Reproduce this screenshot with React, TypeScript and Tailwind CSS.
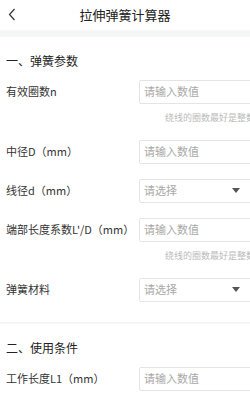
const font = {
  fontFamily: '"Noto Sans CJK SC", "Noto Sans", sans-serif',
};

type Row = {
  label: string;
  kind: "input" | "select";
  hint?: string;
};

const springRows: Row[] = [
  { label: "有效圈数n", kind: "input", hint: "绕线的圈数最好是整数" },
  { label: "中径D（mm）", kind: "input" },
  { label: "线径d（mm）", kind: "select" },
  { label: "端部长度系数L'/D（mm）", kind: "input", hint: "绕线的圈数最好是整数" },
  { label: "弹簧材料", kind: "select" },
];

const useRows: Row[] = [{ label: "工作长度L1（mm）", kind: "input" }];

function Field({ row }: { row: Row }) {
  return (
    <>
      <div className="flex h-[39px] items-center">
        <div className="w-[139px] shrink-0 pl-[6px] text-[11px] leading-none text-[#333]">
          {row.label}
        </div>
        <div className="flex h-[24px] w-[116px] shrink-0 items-center rounded-[2px] border border-[#e4e4e4] pl-[4px] pr-[10px]">
          <span className="flex-1 text-[11px] leading-none text-[#a8a8a8]">
            {row.kind === "input" ? "请输入数值" : "请选择"}
          </span>
          {row.kind === "select" && (
            <svg width="8" height="5" viewBox="0 0 8 5" className="mr-[4px]">
              <path d="M0 0 H8 L4 5 Z" fill="#555" />
            </svg>
          )}
        </div>
      </div>
      {row.hint && (
        <div className="h-[21px] pt-[1px] text-right text-[9px] leading-[11px] text-[#bbb]">
          {row.hint}
        </div>
      )}
    </>
  );
}

function Section({ title, rows }: { title: string; rows: Row[] }) {
  return (
    <div>
      <div className="pl-[6px] pt-[16px] pb-[3px] text-[12px] leading-[16px] text-[#222]">
        {title}
      </div>
      {rows.map((r) => (
        <Field key={r.label} row={r} />
      ))}
    </div>
  );
}

export default function App() {
  return (
    <div className="h-[400px] w-[250px] overflow-hidden bg-white" style={font}>
      <div className="w-[255px]">
        <div className="relative flex h-[30px] w-[250px] items-center justify-center">
          <svg
            width="8"
            height="13"
            viewBox="0 0 8 13"
            className="absolute left-[8px] top-[8px]"
          >
            <polyline
              points="6.5,1 1.5,6.5 6.5,12"
              fill="none"
              stroke="#333"
              strokeWidth="1.2"
            />
          </svg>
          <span className="text-[13px] text-[#222]">拉伸弹簧计算器</span>
        </div>
        <div className="h-[7px] bg-[#f5f7f7]" />
        <Section title="一、弹簧参数" rows={springRows} />
        <div className="h-[13px]" />
        <div className="h-[2px] bg-[#f4f5f5]" />
        <Section title="二、使用条件" rows={useRows} />
      </div>
    </div>
  );
}
